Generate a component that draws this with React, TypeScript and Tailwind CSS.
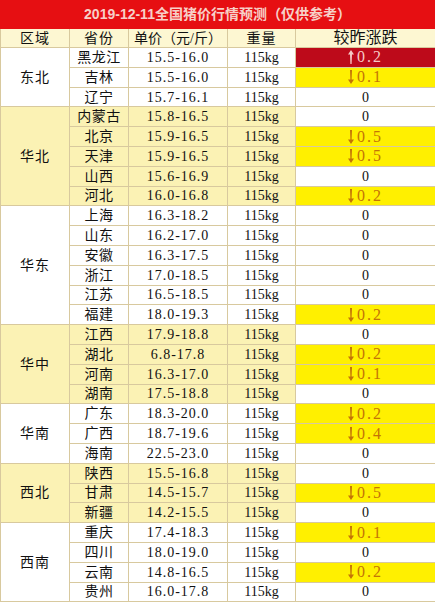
import React from "react";

type Row = { prov: string; price: string; change: number };
type Region = { name: string; tint: boolean; rows: Row[] };

const regions: Region[] = [
  {
    name: "东北",
    tint: false,
    rows: [
      { prov: "黑龙江", price: "15.5-16.0", change: 0.2 },
      { prov: "吉林", price: "15.5-16.0", change: -0.1 },
      { prov: "辽宁", price: "15.7-16.1", change: 0 },
    ],
  },
  {
    name: "华北",
    tint: true,
    rows: [
      { prov: "内蒙古", price: "15.8-16.5", change: 0 },
      { prov: "北京", price: "15.9-16.5", change: -0.5 },
      { prov: "天津", price: "15.9-16.5", change: -0.5 },
      { prov: "山西", price: "15.6-16.9", change: 0 },
      { prov: "河北", price: "16.0-16.8", change: -0.2 },
    ],
  },
  {
    name: "华东",
    tint: false,
    rows: [
      { prov: "上海", price: "16.3-18.2", change: 0 },
      { prov: "山东", price: "16.2-17.0", change: 0 },
      { prov: "安徽", price: "16.3-17.5", change: 0 },
      { prov: "浙江", price: "17.0-18.5", change: 0 },
      { prov: "江苏", price: "16.5-18.5", change: 0 },
      { prov: "福建", price: "18.0-19.3", change: -0.2 },
    ],
  },
  {
    name: "华中",
    tint: true,
    rows: [
      { prov: "江西", price: "17.9-18.8", change: 0 },
      { prov: "湖北", price: "6.8-17.8", change: -0.2 },
      { prov: "河南", price: "16.3-17.0", change: -0.1 },
      { prov: "湖南", price: "17.5-18.8", change: 0 },
    ],
  },
  {
    name: "华南",
    tint: false,
    rows: [
      { prov: "广东", price: "18.3-20.0", change: -0.2 },
      { prov: "广西", price: "18.7-19.6", change: -0.4 },
      { prov: "海南", price: "22.5-23.0", change: 0 },
    ],
  },
  {
    name: "西北",
    tint: true,
    rows: [
      { prov: "陕西", price: "15.5-16.8", change: 0 },
      { prov: "甘肃", price: "14.5-15.7", change: -0.5 },
      { prov: "新疆", price: "14.2-15.5", change: 0 },
    ],
  },
  {
    name: "西南",
    tint: false,
    rows: [
      { prov: "重庆", price: "17.4-18.3", change: -0.1 },
      { prov: "四川", price: "18.0-19.0", change: 0 },
      { prov: "云南", price: "14.8-16.5", change: -0.2 },
      { prov: "贵州", price: "16.0-17.8", change: 0 },
    ],
  },
];

const serif = "font-['Liberation_Serif','Noto_Sans_CJK_SC',serif]";
const cell = "flex items-center justify-center border-r border-b border-[#d8c99e]";

function Arrow({ up }: { up: boolean }) {
  return (
    <svg width="6" height="14" viewBox="0 0 6 14" className="mr-[3px]" fill="currentColor">
      {up ? (
        <path d="M3 0 L6 4.5 L4 4.5 L3.6 14 L2.4 14 L2 4.5 L0 4.5 Z" />
      ) : (
        <path d="M2 0 L4 0 L3.6 9.5 L6 9.5 L3 14 L0 9.5 L2.4 9.5 Z" />
      )}
    </svg>
  );
}

function Change({ v }: { v: number }) {
  if (v > 0) {
    return (
      <div className={`${cell} bg-[#bd0a1a] text-[#f6c9c6] text-[16px] tracking-[2px]`}>
        <Arrow up />0.{Math.round(v * 10)}
      </div>
    );
  }
  if (v < 0) {
    return (
      <div className={`${cell} bg-[#fff000] text-[#c47406] text-[16px] tracking-[2px]`}>
        <Arrow up={false} />0.{Math.round(-v * 10)}
      </div>
    );
  }
  return <div className={`${cell} bg-white text-[#111] text-[14px]`}>0</div>;
}

export default function App() {
  return (
    <div className={`w-[435px] h-[603px] overflow-hidden bg-white ${serif}`}>
      <div className="h-[29px] bg-[#e60f12] flex items-center justify-center">
        <span className="font-['Liberation_Sans','Noto_Sans_CJK_SC',sans-serif] font-bold text-[14px] text-[#f7d0c8]">
          2019-12-11全国猪价行情预测（仅供参考）
        </span>
      </div>
      <div className="grid grid-cols-[69px_59px_99px_68px_140px] grid-rows-[19px_repeat(28,19.8px)] border-l border-[#d8c99e] text-[#111]">
        <div className={`${cell} bg-[#fdf7d2] text-[14px] tracking-[1px]`}>区域</div>
        <div className={`${cell} bg-[#fdf7d2] text-[14px] tracking-[1px]`}>省份</div>
        <div className={`${cell} bg-[#fdf7d2] text-[14px]`}>单价（元/斤）</div>
        <div className={`${cell} bg-[#fdf7d2] text-[14px] tracking-[1px]`}>重量</div>
        <div className={`${cell} bg-[#fdf7d2] text-[16px]`}>较昨涨跌</div>
        {regions.map((r) => {
          const bg = r.tint ? "bg-[#fbf2b4]" : "bg-white";
          return (
            <React.Fragment key={r.name}>
              <div
                className={`${cell} ${bg} col-start-1 text-[14px] tracking-[1px]`}
                style={{ gridRow: `span ${r.rows.length}` }}
              >
                {r.name}
              </div>
              {r.rows.map((row) => (
                <React.Fragment key={row.prov}>
                  <div className={`${cell} ${bg} col-start-2 text-[14px] tracking-[0.5px]`}>{row.prov}</div>
                  <div className={`${cell} ${bg} text-[14px] tracking-[1px]`}>{row.price}</div>
                  <div className={`${cell} ${bg} text-[14px]`}>115kg</div>
                  <Change v={row.change} />
                </React.Fragment>
              ))}
            </React.Fragment>
          );
        })}
      </div>
    </div>
  );
}
